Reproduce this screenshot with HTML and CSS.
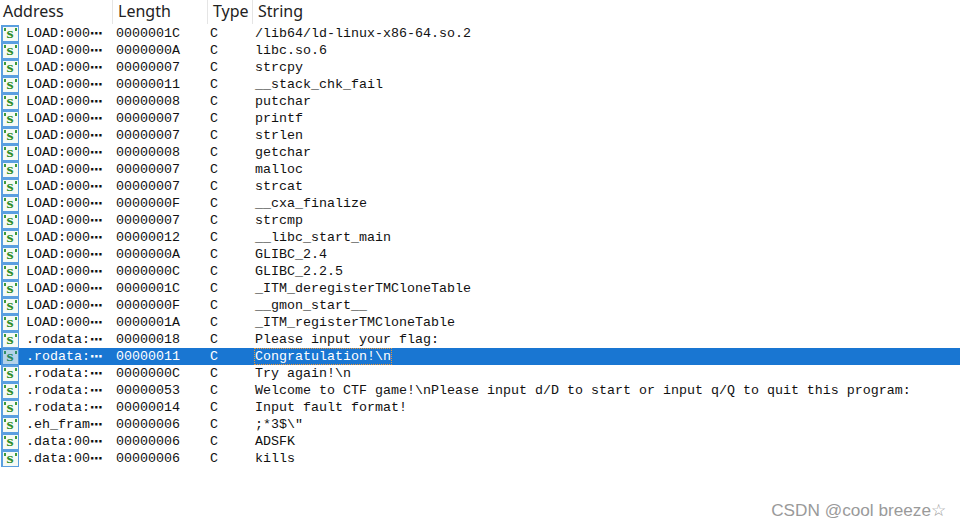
FILE: index.html
```html
<!DOCTYPE html>
<html lang="en">
<head>
  <meta charset="UTF-8">
  <title>Strings window</title>
  <link rel="stylesheet" href="styles.css">
</head>
<body>

<div class="header">
  <div class="col-address">Address</div>
  <div class="col-length">Length</div>
  <div class="col-type">Type</div>
  <div class="col-string">String</div>
</div>

<div id="rows" class="rows"></div>

<div class="watermark">CSDN @cool breeze☆</div>

<script>
  const rows = [
    ['LOAD:000', '0000001C', '/lib64/ld-linux-x86-64.so.2'],
    ['LOAD:000', '0000000A', 'libc.so.6'],
    ['LOAD:000', '00000007', 'strcpy'],
    ['LOAD:000', '00000011', '__stack_chk_fail'],
    ['LOAD:000', '00000008', 'putchar'],
    ['LOAD:000', '00000007', 'printf'],
    ['LOAD:000', '00000007', 'strlen'],
    ['LOAD:000', '00000008', 'getchar'],
    ['LOAD:000', '00000007', 'malloc'],
    ['LOAD:000', '00000007', 'strcat'],
    ['LOAD:000', '0000000F', '__cxa_finalize'],
    ['LOAD:000', '00000007', 'strcmp'],
    ['LOAD:000', '00000012', '__libc_start_main'],
    ['LOAD:000', '0000000A', 'GLIBC_2.4'],
    ['LOAD:000', '0000000C', 'GLIBC_2.2.5'],
    ['LOAD:000', '0000001C', '_ITM_deregisterTMCloneTable'],
    ['LOAD:000', '0000000F', '__gmon_start__'],
    ['LOAD:000', '0000001A', '_ITM_registerTMCloneTable'],
    ['.rodata:', '00000018', 'Please input your flag:'],
    ['.rodata:', '00000011', 'Congratulation!\\n'],
    ['.rodata:', '0000000C', 'Try again!\\n'],
    ['.rodata:', '00000053', 'Welcome to CTF game!\\nPlease input d/D to start or input q/Q to quit this program:'],
    ['.rodata:', '00000014', 'Input fault format!'],
    ['.eh_fram', '00000006', ';*3$\\"'],
    ['.data:00', '00000006', 'ADSFK'],
    ['.data:00', '00000006', 'kills']
  ];

  const icon = `<svg class="icon" width="18" height="17" viewBox="0 0 18 17">
    <rect width="18" height="17" fill="#5b9fe0"/>
    <rect x="2" y="2" width="15" height="14" fill="#f6faf4"/>
    <path d="M4 3v3M15 3v3" stroke="#3d9a3a" stroke-width="2"/>
    <text x="7" y="13.5" transform="scale(1.3 1)" text-anchor="middle" class="icon-s">s</text>
  </svg>`;

  const list = document.getElementById('rows');
  rows.forEach((r, i) => {
    const row = document.createElement('div');
    row.className = i === 19 ? 'row selected' : 'row';
    row.innerHTML = `<div class="col-address">${icon}<span class="addr">${r[0]}</span><span class="more">⋯</span></div>
      <div class="col-length">${r[1]}</div>
      <div class="col-type">C</div>
      <div class="col-string"><span class="str">${r[2]}</span></div>`;
    list.appendChild(row);
  });
</script>

</body>
</html>
```

FILE: styles.css
```css
html, body {
  height: 100%;
}

body {
  margin: 0;
  background: white;
  position: relative;
  overflow: hidden;
}

.header {
  display: flex;
  height: 24px;
  margin-bottom: 1px;
  font-family: "Noto Sans", sans-serif;
  font-size: 16px;
  line-height: 22px;
  color: #222;
}

.header > div {
  border-right: 1px solid #e5e5e5;
  box-sizing: border-box;
}

.header .col-address {
  padding-left: 3px;
}

.header .col-length {
  padding-left: 5px;
}

.header .col-type {
  padding-left: 5px;
}

.header .col-string {
  padding-left: 5px;
  border-right: none;
}

.col-address {
  width: 113px;
  flex: none;
}

.col-length {
  width: 95px;
  flex: none;
}

.col-type {
  width: 45px;
  flex: none;
}

.col-string {
  flex: 1;
  white-space: nowrap;
}

.row {
  display: flex;
  height: 17px;
  font-family: "Liberation Mono", monospace;
  font-size: 13.33px;
  line-height: 17px;
  color: #111;
  white-space: pre;
}

.row .col-address {
  display: flex;
  align-items: center;
}

.row .col-length {
  padding-left: 3px;
  box-sizing: border-box;
}

.row .col-type {
  padding-left: 2px;
  box-sizing: border-box;
}

.row .col-string {
  padding-left: 2px;
  box-sizing: border-box;
}

.icon {
  flex: none;
  margin-left: 1px;
  margin-right: 7px;
}

.icon-s {
  font-family: "Liberation Serif", serif;
  font-weight: bold;
  font-size: 14px;
  fill: #2f8f2c;
}

.more {
  font-family: "DejaVu Sans", sans-serif;
  font-size: 13px;
  font-weight: bold;
  line-height: 15px;
}

.selected {
  background: #1976d2;
  color: white;
}

.selected .str {
  display: inline-block;
  height: 17px;
  margin-left: -1px;
  padding: 0 1px;
  box-sizing: border-box;
  outline: 1px dotted #e8963a;
  outline-offset: -1px;
}

.selected .icon {
  opacity: 0.7;
}

.watermark {
  position: absolute;
  right: 14px;
  bottom: 6px;
  font-family: "Liberation Sans", sans-serif;
  font-size: 17.2px;
  color: #9a9a9a;
}
```
